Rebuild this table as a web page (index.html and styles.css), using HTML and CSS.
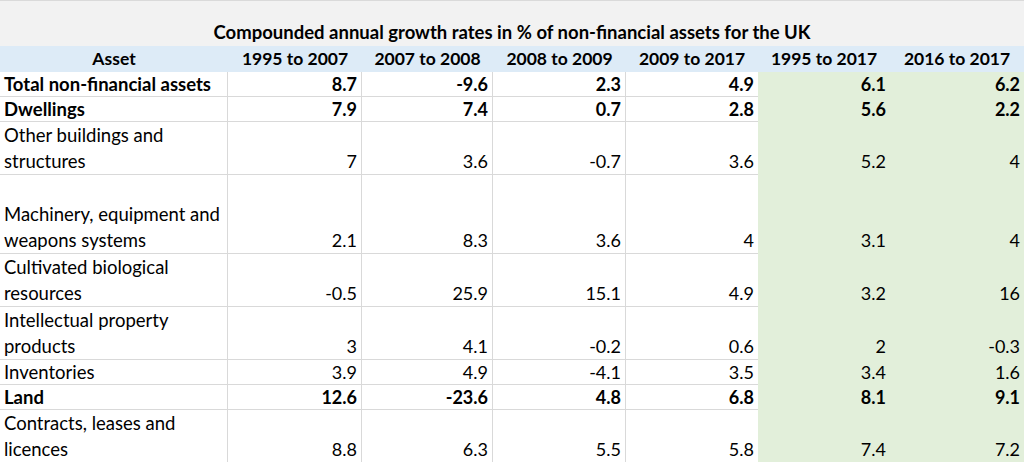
FILE: index.html
```html
<!DOCTYPE html>
<html lang="en">
<head>
<meta charset="utf-8">
<title>Compounded annual growth rates</title>
<link rel="stylesheet" href="styles.css">
</head>
<body>
<table class="sheet">
  <colgroup>
    <col class="c-asset">
    <col class="c-a">
    <col class="c-b">
    <col class="c-c">
    <col class="c-d">
    <col class="c-e">
    <col class="c-f">
  </colgroup>
  <thead>
    <tr class="title-row">
      <th class="title" colspan="7">Compounded annual growth rates in % of non-financial assets for the UK</th>
    </tr>
    <tr class="head-row">
      <th>Asset</th>
      <th>1995 to 2007</th>
      <th>2007 to 2008</th>
      <th>2008 to 2009</th>
      <th>2009 to 2017</th>
      <th>1995 to 2017</th>
      <th>2016 to 2017</th>
    </tr>
  </thead>
  <tbody>
    <tr class="r1 bold">
      <td class="label">Total non-financial assets</td>
      <td class="num">8.7</td><td class="num">-9.6</td><td class="num">2.3</td><td class="num last">4.9</td>
      <td class="num green">6.1</td><td class="num green">6.2</td>
    </tr>
    <tr class="r1 bold">
      <td class="label">Dwellings</td>
      <td class="num">7.9</td><td class="num">7.4</td><td class="num">0.7</td><td class="num last">2.8</td>
      <td class="num green">5.6</td><td class="num green">2.2</td>
    </tr>
    <tr class="r2">
      <td class="label">Other buildings and<br>structures</td>
      <td class="num">7</td><td class="num">3.6</td><td class="num">-0.7</td><td class="num last">3.6</td>
      <td class="num green">5.2</td><td class="num green">4</td>
    </tr>
    <tr class="r3">
      <td class="label">Machinery, equipment and<br>weapons systems</td>
      <td class="num">2.1</td><td class="num">8.3</td><td class="num">3.6</td><td class="num last">4</td>
      <td class="num green">3.1</td><td class="num green">4</td>
    </tr>
    <tr class="r2">
      <td class="label">Cultivated biological<br>resources</td>
      <td class="num">-0.5</td><td class="num">25.9</td><td class="num">15.1</td><td class="num last">4.9</td>
      <td class="num green">3.2</td><td class="num green">16</td>
    </tr>
    <tr class="r2">
      <td class="label">Intellectual property<br>products</td>
      <td class="num">3</td><td class="num">4.1</td><td class="num">-0.2</td><td class="num last">0.6</td>
      <td class="num green">2</td><td class="num green">-0.3</td>
    </tr>
    <tr class="r1">
      <td class="label">Inventories</td>
      <td class="num">3.9</td><td class="num">4.9</td><td class="num">-4.1</td><td class="num last">3.5</td>
      <td class="num green">3.4</td><td class="num green">1.6</td>
    </tr>
    <tr class="r1 bold">
      <td class="label">Land</td>
      <td class="num">12.6</td><td class="num">-23.6</td><td class="num">4.8</td><td class="num last">6.8</td>
      <td class="num green">8.1</td><td class="num green">9.1</td>
    </tr>
    <tr class="r2">
      <td class="label">Contracts, leases and<br>licences</td>
      <td class="num">8.8</td><td class="num">6.3</td><td class="num">5.5</td><td class="num last">5.8</td>
      <td class="num green">7.4</td><td class="num green">7.2</td>
    </tr>
  </tbody>
</table>
</body>
</html>
```
FILE: styles.css
```css
html, body {
  margin: 0;
  padding: 0;
  background: #ffffff;
}

.sheet {
  width: 1024px;
  table-layout: fixed;
  border-collapse: separate;
  border-spacing: 0;
  font-family: Lato, "Open Sans", sans-serif;
  font-size: 18px;
  color: #000000;
}

.c-asset { width: 228px; }
.c-a { width: 134px; }
.c-b { width: 131px; }
.c-c { width: 133px; }
.c-d { width: 132px; }
.c-e { width: 132px; }
.c-f { width: 134px; }

.sheet th,
.sheet td {
  padding: 0 4px;
  vertical-align: bottom;
  white-space: nowrap;
  overflow: hidden;
}

.title-row { height: 46px; }

.title {
  background: #f2f2f2;
  border-top: 1px solid #dadada;
  font-size: 18.5px;
  font-weight: 700;
  text-align: center;
  line-height: 27px;
}

.head-row { height: 26px; }

.head-row th {
  background: #ddebf7;
  font-size: 17.5px;
  font-weight: 700;
  text-align: center;
  line-height: 26px;
}

.sheet td {
  border-bottom: 1px solid #d9d9d9;
  border-right: 1px solid #d9d9d9;
  line-height: 24px;
}

.sheet td.label { font-size: 18.5px; }

.sheet td.last { border-right: none; }

.sheet td.green {
  background: #e2efda;
  border-right: none;
  border-bottom-color: #e2efda;
}

.r2 td, .r3 td { line-height: 26px; }

.r1 { height: 25px; }
.r2 { height: 53px; }
.r3 { height: 79px; }

.bold td { font-weight: 700; }

.label { text-align: left; }
.num { text-align: right; }
```
